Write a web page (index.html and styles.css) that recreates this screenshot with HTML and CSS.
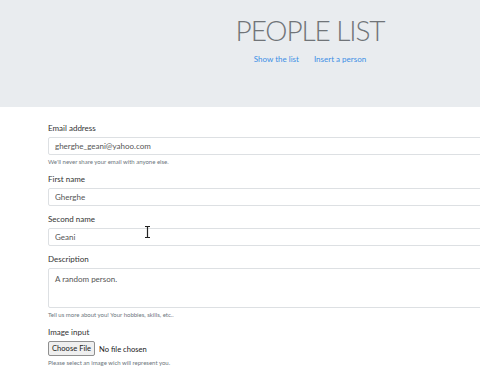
FILE: index.html
```html
<!DOCTYPE html>
<html lang="en">
<head>
  <meta charset="UTF-8" />
  <title>People list</title>
  <link rel="stylesheet" href="styles.css">
</head>
<body>
  <!-- Top banner -->
  <header class="jumbotron">
    <h1 class="title">PEOPLE LIST</h1>
    <nav class="links">
      <a href="#">Show the list</a>
      <a href="#">Insert a person</a>
    </nav>
  </header>

  <!-- Insert form -->
  <form class="person-form">
    <div class="group">
      <label>Email address</label>
      <input class="field" type="text" value="gherghe_geani@yahoo.com">
      <small class="help">We'll never share your email with anyone else.</small>
    </div>
    <div class="group">
      <label>First name</label>
      <input class="field" type="text" value="Gherghe">
    </div>
    <div class="group">
      <label>Second name</label>
      <input class="field" type="text" value="Geani">
    </div>
    <div class="group">
      <label>Description</label>
      <textarea class="field area">A random person.</textarea>
      <small class="help">Tell us more about you! Your hobbies, skills, etc..</small>
    </div>
    <div class="group">
      <label>Image input</label>
      <div class="file-row">
        <span class="file-btn">Choose File</span>
        <span class="file-name">No file chosen</span>
      </div>
      <small class="help">Please select an image wich will represent you.</small>
    </div>
  </form>

  <!-- mouse text cursor -->
  <svg class="cursor" width="7" height="12" viewBox="0 0 7 12">
    <path d="M1 0.5h5M3.5 0.5v11M1 11.5h5" stroke="#222" stroke-width="1.2" fill="none"/>
  </svg>
</body>
</html>
```

FILE: styles.css
```css
* {
  margin: 0;
  padding: 0;
  box-sizing: border-box;
}
body {
  width: 480px;
  height: 376px;
  overflow: hidden;
  font-family: Lato, 'Open Sans', sans-serif;
  color: #333;
  background: #fff;
  position: relative;
}
/* Banner */
.jumbotron {
  height: 107px;
  background: #e9ecef;
  display: flex;
  flex-direction: column;
  align-items: center;
  padding-left: 140px;
  padding-top: 14px;
}
.title {
  font-weight: 300;
  font-size: 28px;
  line-height: 33px;
  color: #707478;
  letter-spacing: -1.1px;
}
.links {
  display: flex;
  gap: 15px;
  margin-top: 7px;
}
.links a {
  font-size: 8px;
  color: #3d8fe6;
  text-decoration: none;
}
/* Form */
.person-form {
  padding: 16px 0 0 48px;
  width: 700px;
}
.group {
  display: flex;
  flex-direction: column;
  margin-bottom: 8px;
}
label {
  font-size: 8px;
  line-height: 10px;
  color: #333;
  margin-bottom: 4px;
}
.field {
  font-family: inherit;
  font-size: 8px;
  color: #555;
  height: 18px;
  padding: 0 6px;
  border: 1px solid #dde0e3;
  border-radius: 2px;
  background: #fff;
  outline: none;
}
.area {
  height: 40px;
  padding-top: 5px;
  resize: none;
}
.help {
  font-size: 6px;
  line-height: 9px;
  color: #6c757d;
  margin-top: 2px;
}
.file-row {
  display: flex;
  align-items: center;
  gap: 4px;
  height: 15px;
}
.file-btn {
  font-size: 7.6px;
  line-height: 13px;
  padding: 0 3px;
  border: 1px solid #8f8f8f;
  border-radius: 2px;
  background: #efefef;
  color: #222;
}
.file-name {
  font-size: 7.6px;
  color: #222;
}
.cursor {
  position: absolute;
  left: 144px;
  top: 226px;
}
```
